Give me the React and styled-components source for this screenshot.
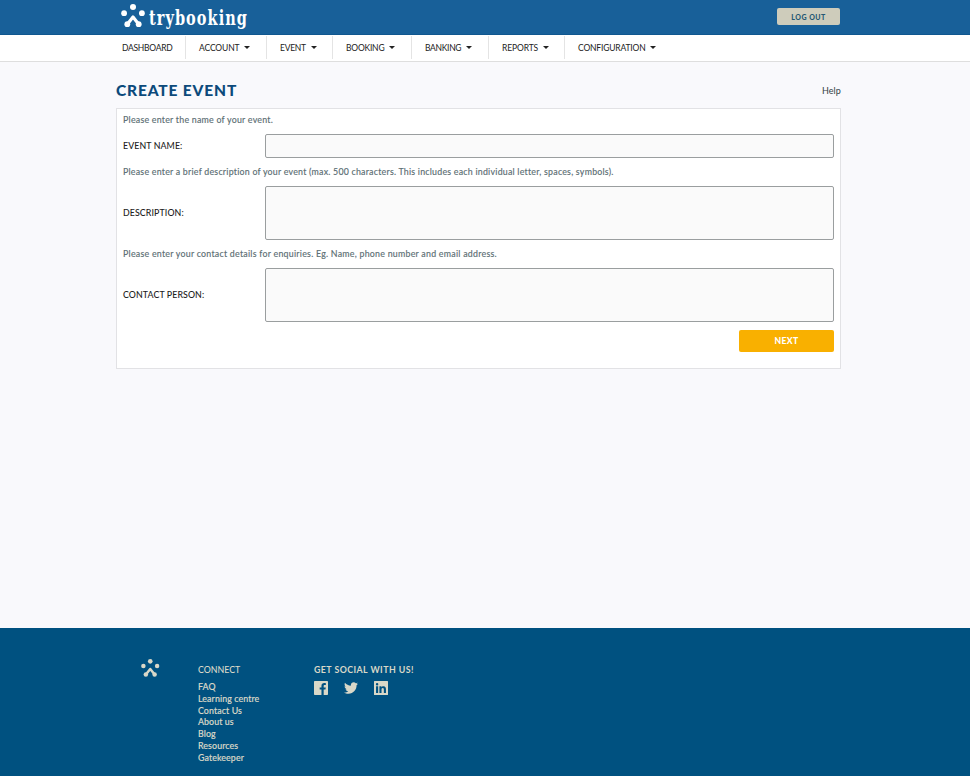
import React from 'react';
import styled, { createGlobalStyle } from 'styled-components';
import { FaTwitter } from 'react-icons/fa';

const menu = [
  { label: 'DASHBOARD', width: 70, spacing: -0.27 },
  { label: 'ACCOUNT', width: 81, spacing: -0.12, arrow: true },
  { label: 'EVENT', width: 66, spacing: -0.25, arrow: true },
  { label: 'BOOKING', width: 79, spacing: -0.2, arrow: true },
  { label: 'BANKING', width: 77, spacing: -0.3, arrow: true },
  { label: 'REPORTS', width: 76, spacing: -0.12, arrow: true },
  { label: 'CONFIGURATION', width: 110, spacing: -0.17, arrow: true },
];

const fields = [
  {
    hint: 'Please enter the name of your event.',
    label: 'EVENT NAME:',
    height: 24,
    spacing: 0.24,
  },
  {
    hint: 'Please enter a brief description of your event (max. 500 characters. This includes each individual letter, spaces, symbols).',
    label: 'DESCRIPTION:',
    height: 54,
    spacing: 0.23,
  },
  {
    hint: 'Please enter your contact details for enquiries. Eg. Name, phone number and email address.',
    label: 'CONTACT PERSON:',
    height: 54,
    spacing: 0.25,
  },
];

const links = ['FAQ', 'Learning centre', 'Contact Us', 'About us', 'Blog', 'Resources', 'Gatekeeper'];

const Mark = ({ width, color }) => (
  <svg width={width} height={width} viewBox="0 0 24 24" fill={color}>
    <circle cx="12" cy="3" r="3" />
    <circle cx="3.1" cy="9.2" r="2.9" />
    <circle cx="20.9" cy="9.2" r="2.9" />
    <circle cx="6.3" cy="20.2" r="2.9" />
    <circle cx="17.7" cy="20.2" r="2.9" />
    <path d="M6.3 20.2L12 13L17.7 20.2" fill="none" stroke={color} strokeWidth="3.2" strokeLinejoin="round" />
  </svg>
);

const App = () => (
  <Page>
    <GlobalStyle />
    <TopBar>
      <Brand>
        <Mark width={24} color="#fff" />
        <Wordmark width="106" height="33" viewBox="0 0 106 33">
          <text x="1" y="24" textLength="99" lengthAdjust="spacingAndGlyphs">trybooking</text>
        </Wordmark>
      </Brand>
      <LogOut>LOG OUT</LogOut>
    </TopBar>
    <Nav>
      {menu.map(item => (
        <NavItem key={item.label} $width={item.width} $spacing={item.spacing}>
          {item.label}
          {item.arrow && <Caret />}
        </NavItem>
      ))}
    </Nav>
    <Main>
      <Heading>
        <Title>CREATE EVENT</Title>
        <Help>Help</Help>
      </Heading>
      <Panel>
        {fields.map(field => (
          <Field key={field.label}>
            <Hint $spacing={field.spacing}>{field.hint}</Hint>
            <Row>
              <Label>{field.label}</Label>
              <Input $height={field.height} aria-label={field.label} />
            </Row>
          </Field>
        ))}
        <Next>NEXT</Next>
      </Panel>
    </Main>
    <Footer>
      <FooterMark>
        <Mark width={18.5} color="#d9d8c8" />
      </FooterMark>
      <Connect>
        <FooterTitle>CONNECT</FooterTitle>
        <Links>
          {links.map(link => <li key={link}>{link}</li>)}
        </Links>
      </Connect>
      <div>
        <FooterTitle $bold>GET SOCIAL WITH US!</FooterTitle>
        <Social>
          <svg width="14" height="14" viewBox="0 0 24 24">
            <path d="M22.7 0H1.3C.6 0 0 .6 0 1.3v21.4C0 23.4.6 24 1.3 24h11.5v-9.3H9.7v-3.6h3.1V8.4c0-3.1 1.9-4.8 4.7-4.8 1.3 0 2.5.1 2.8.1V7h-1.9c-1.5 0-1.8.7-1.8 1.8v2.3h3.6l-.5 3.6h-3.1V24h6.1c.7 0 1.3-.6 1.3-1.3V1.3C24 .6 23.4 0 22.7 0z" />
          </svg>
          <FaTwitter size={14} />
          <svg width="14" height="14" viewBox="0 0 24 24">
            <path fillRule="evenodd" d="M1 0h22a1 1 0 0 1 1 1v22a1 1 0 0 1-1 1H1a1 1 0 0 1-1-1V1a1 1 0 0 1 1-1zM3.5 9v11.4h3.6V9zM5.3 3.3a2.1 2.1 0 1 0 0 4.2 2.1 2.1 0 0 0 0-4.2zM9.3 9v11.4h3.6v-5.6c0-1.5.3-2.9 2.1-2.9s1.9 1.7 1.9 3v5.5h3.6v-6.2c0-3.1-.7-5.4-4.3-5.4-1.7 0-2.9.9-3.4 1.8V9z" />
          </svg>
        </Social>
      </div>
    </Footer>
  </Page>
);

const GlobalStyle = createGlobalStyle`
  * {
    box-sizing: border-box;
  }

  body {
    margin: 0;
    font-family: Lato, sans-serif;
    background: #f9f9fc;
  }
`;

const Page = styled.div`
  display: flex;
  flex-direction: column;
  height: 776px;
  overflow: hidden;
`;

const TopBar = styled.header`
  display: flex;
  justify-content: space-between;
  align-items: flex-start;
  height: 35px;
  padding: 0 130px 0 121px;
  background: #186099;
  border-bottom: 1px solid #10578f;
`;

const Brand = styled.div`
  display: flex;
  gap: 3px;

  > svg:first-child {
    margin-top: 4px;
  }
`;

const Wordmark = styled.svg`
  overflow: visible;
  font-family: 'DejaVu Serif Condensed', 'DejaVu Serif', serif;
  font-size: 21px;
  font-weight: bold;
  letter-spacing: 1.4px;
  fill: #fff;
  margin-top: 1px;
`;

const LogOut = styled.button`
  width: 63px;
  height: 17px;
  margin-top: 8px;
  padding: 1px 0 0;
  border: 0;
  border-radius: 2px;
  background: #ceccbb;
  color: #255873;
  font-family: inherit;
  font-size: 7px;
  font-weight: 900;
  letter-spacing: 0.5px;
`;

const Nav = styled.nav`
  display: flex;
  height: 27px;
  padding: 1px 116px 2px;
  background: #fff;
  border-bottom: 1px solid #dedede;
`;

const NavItem = styled.div`
  display: flex;
  align-items: center;
  width: ${props => props.$width}px;
  padding-left: 13px;
  border-right: 1px solid #e4e4e4;
  color: #222;
  font-size: 8.5px;
  letter-spacing: ${props => props.$spacing}px;
  white-space: nowrap;

  &:first-child {
    padding-left: 6px;
  }

  &:last-child {
    border-right: 0;
  }
`;

const Caret = styled.span`
  margin-left: 5px;
  border: 3px solid transparent;
  border-top: 3px solid #222;
  border-bottom: 0;
`;

const Main = styled.main`
  width: 725px;
  margin-left: 116px;
  flex: 1;
`;

const Heading = styled.div`
  display: flex;
  justify-content: space-between;
  align-items: center;
  height: 46px;
  padding-top: 10px;
`;

const Title = styled.h1`
  margin: 0;
  color: #0c4a7b;
  font-size: 15.5px;
  font-weight: 900;
  letter-spacing: 0.85px;
`;

const Help = styled.span`
  color: #333f44;
  font-size: 9px;
  letter-spacing: 0.1px;
`;

const Panel = styled.section`
  height: 261px;
  padding: 4px 6px 0;
  background: #fff;
  border: 1px solid #e2e2e5;
`;

const Field = styled.div`
  margin-bottom: 7px;
`;

const Hint = styled.div`
  height: 13px;
  margin-bottom: 8px;
  color: #5d7075;
  font-size: 8.8px;
  font-weight: 500;
  line-height: 13px;
  letter-spacing: ${props => props.$spacing}px;
  -webkit-text-stroke: 0.1px currentColor;
  white-space: nowrap;
`;

const Row = styled.div`
  display: grid;
  grid-template-columns: 142px 569px;
  align-items: center;
`;

const Label = styled.label`
  padding-bottom: 1px;
  color: #222;
  font-size: 8.8px;
  font-weight: 500;
  letter-spacing: 0.1px;
`;

const Input = styled.textarea`
  display: block;
  width: 100%;
  height: ${props => props.$height}px;
  border: 1px solid #9a9e9f;
  border-radius: 2px;
  background: #fafafa;
  resize: none;
  overflow: hidden;
`;

const Next = styled.button`
  display: block;
  width: 95px;
  height: 22px;
  margin-top: 8px;
  margin-left: auto;
  border: 0;
  border-radius: 2px;
  background: #f9b000;
  color: #fff;
  font-family: inherit;
  font-size: 8.6px;
  font-weight: 900;
  letter-spacing: 0.4px;
`;

const Footer = styled.footer`
  display: flex;
  height: 148px;
  padding-top: 31px;
  background: #005180;
  color: #d9d8c8;
`;

const FooterMark = styled.div`
  width: 198px;
  padding-left: 141px;
`;

const Connect = styled.div`
  width: 116px;
`;

const FooterTitle = styled.div`
  height: 22px;
  padding-top: 5px;
  font-size: 8.8px;
  line-height: 12px;
  font-weight: ${props => (props.$bold ? 700 : 500)};
  letter-spacing: ${props => (props.$bold ? 0.45 : 0)}px;
`;

const Links = styled.ul`
  margin: 0;
  padding: 0;
  list-style: none;
  font-size: 8.8px;
  font-weight: 500;
  line-height: 11.8px;
  letter-spacing: 0.1px;
  -webkit-text-stroke: 0.15px currentColor;
`;

const Social = styled.div`
  display: flex;
  gap: 16px;
  fill: currentColor;
`;

export default App;
